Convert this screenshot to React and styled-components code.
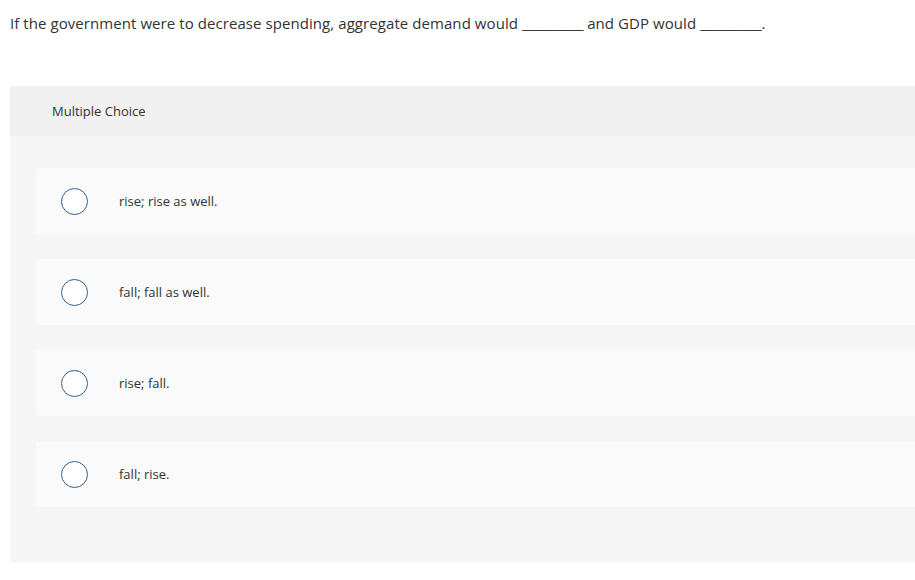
import React from 'react';
import styled, { createGlobalStyle } from 'styled-components';

const GlobalStyle = createGlobalStyle`
  html, body {
    margin: 0;
    padding: 0;
    background: #ffffff;
    overflow-x: hidden;
  }
  body {
    font-family: "Open Sans", Lato, Arial, sans-serif;
    color: #333333;
  }
`;

const options = ['rise; rise as well.', 'fall; fall as well.', 'rise; fall.', 'fall; rise.'];

const App = () => (
  <>
    <GlobalStyle />
    <Page>
      <Question>
        If the government were to decrease spending, aggregate demand would{' '}
        <Blank>__________</Blank> and GDP would <Blank>__________</Blank>.
      </Question>
      <Panel>
        <PanelHeader>Multiple Choice</PanelHeader>
        <PanelBody>
          {options.map((text) => (
            <Option key={text}>
              <Radio />
              <OptionText>{text}</OptionText>
            </Option>
          ))}
        </PanelBody>
      </Panel>
    </Page>
  </>
);

const Page = styled.div`
  width: 935px;
  padding: 13px 0 0 10px;
  display: flex;
  flex-direction: column;
`;

const Question = styled.p`
  margin: 0;
  font-size: 15px;
  line-height: 21px;
  letter-spacing: 0.07px;
  color: #333333;
`;

const Blank = styled.span`
  letter-spacing: -0.45px;
`;

const Panel = styled.div`
  margin-top: 52px;
  border-radius: 3px;
  overflow: hidden;
`;

const PanelHeader = styled.div`
  height: 50px;
  background: #f0f0f0;
  display: flex;
  align-items: center;
  padding-left: 42px;
  font-size: 13px;
  color: #333333;
`;

const PanelBody = styled.div`
  background: #f5f5f5;
  padding: 32px 0 55px 26px;
  display: flex;
  flex-direction: column;
  gap: 25px;
`;

const Option = styled.div`
  height: 66px;
  background: #fafafa;
  border-radius: 3px;
  display: flex;
  align-items: center;
  padding-left: 25px;
`;

const Radio = styled.span`
  width: 25px;
  height: 25px;
  border: 1.5px solid #2d5f8e;
  border-radius: 50%;
  background: #ffffff;
  flex-shrink: 0;
`;

const OptionText = styled.span`
  margin-left: 31px;
  font-size: 13px;
  color: #333333;
`;

export default App;
